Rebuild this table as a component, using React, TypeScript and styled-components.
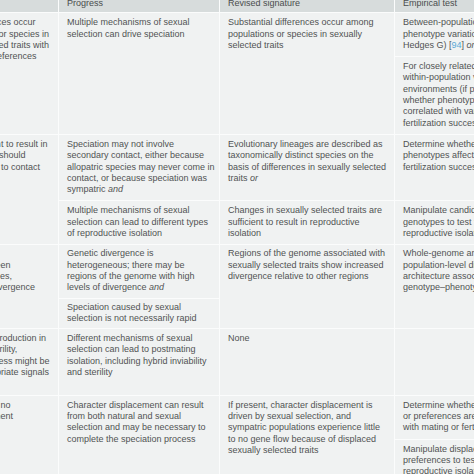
import React from "react";
import styled, { createGlobalStyle } from "styled-components";

const GlobalStyle = createGlobalStyle`
  html, body {
    margin: 0;
    padding: 0;
    background: #f0f2f2;
    overflow: hidden;
  }
  body {
    font-family: "Liberation Sans", Arial, Helvetica, sans-serif;
  }
`;

type Line = React.ReactNode;

const Viewport = styled.div`
  width: 474px;
  height: 474px;
  overflow: hidden;
`;

// the screenshot is a crop of a wider table, so the table is pulled up and left
const Table = styled.table`
  margin: -8px 0 0 -89px;
  width: 683px;
  table-layout: fixed;
  border-collapse: collapse;
  font-size: 9px;
  line-height: 11.3px;
  color: #505353;
`;

const Col = styled.col<{ $w: number }>`
  width: ${(p) => p.$w}px;
`;

const HeadCell = styled.th`
  background: #d7dcdc;
  color: #4a4d4d;
  font-weight: normal;
  text-align: left;
  padding: 6px 8px 3px;
  border: 1px solid #fbfcfc;
  border-top: none;
  white-space: nowrap;
`;

const Cell = styled.td<{ $compact?: boolean }>`
  background: #f0f2f2;
  vertical-align: top;
  text-align: left;
  padding: ${(p) => (p.$compact ? "3px 8px 4px" : "4px 8px 5px")};
  border: 1px solid #fbfcfc;
  white-space: nowrap;
`;

const LineText = styled.div`
  display: block;
`;

const Ref = styled.span`
  color: #58a9d8;
`;

const Lines: React.FC<{ lines: Line[] }> = ({ lines }) => (
  <>
    {lines.map((l, i) => (
      <LineText key={i}>{l}</LineText>
    ))}
  </>
);

const App: React.FC = () => {
  return (
    <Viewport>
      <GlobalStyle />
      <Table>
        <colgroup>
          <Col $w={147} />
          <Col $w={161} />
          <Col $w={175} />
          <Col $w={200} />
        </colgroup>
        <thead>
          <tr>
            <HeadCell>Signature</HeadCell>
            <HeadCell>Progress</HeadCell>
            <HeadCell>Revised signature</HeadCell>
            <HeadCell>Empirical test</HeadCell>
          </tr>
        </thead>
        <tbody>
          <tr>
            <Cell rowSpan={2}>
              <Lines
                lines={[
                  "Substantial differences occur",
                  "among populations or species in",
                  "their sexually selected traits with",
                  "divergent mating preferences",
                ]}
              />
            </Cell>
            <Cell rowSpan={2}>
              <Lines
                lines={[
                  "Multiple mechanisms of sexual",
                  "selection can drive speciation",
                ]}
              />
            </Cell>
            <Cell rowSpan={2}>
              <Lines
                lines={[
                  "Substantial differences occur among",
                  "populations or species in sexually",
                  "selected traits",
                ]}
              />
            </Cell>
            <Cell>
              <Lines
                lines={[
                  "Between-population differences in",
                  "phenotype variation (effect size as",
                  <>
                    Hedges G) [<Ref>94</Ref>] <em>or</em>
                  </>,
                ]}
              />
            </Cell>
          </tr>
          <tr>
            <Cell>
              <Lines
                lines={[
                  "For closely related species, compare",
                  "within-population variation across",
                  "environments (if possible) and test",
                  "whether phenotypic differences are",
                  "correlated with variation in mating or",
                  "fertilization success",
                ]}
              />
            </Cell>
          </tr>

          <tr>
            <Cell rowSpan={2}>
              <Lines
                lines={[
                  "Divergence sufficient to result in",
                  "prezygotic isolation should",
                  "be established prior to contact",
                ]}
              />
            </Cell>
            <Cell>
              <Lines
                lines={[
                  "Speciation may not involve",
                  "secondary contact, either because",
                  "allopatric species may never come in",
                  "contact, or because speciation was",
                  <>
                    sympatric <em>and</em>
                  </>,
                ]}
              />
            </Cell>
            <Cell>
              <Lines
                lines={[
                  "Evolutionary lineages are described as",
                  "taxonomically distinct species on the",
                  "basis of differences in sexually selected",
                  <>
                    traits <em>or</em>
                  </>,
                ]}
              />
            </Cell>
            <Cell>
              <Lines
                lines={[
                  "Determine whether sexually selected",
                  "phenotypes affect mating or",
                  "fertilization success",
                ]}
              />
            </Cell>
          </tr>
          <tr>
            <Cell>
              <Lines
                lines={[
                  "Multiple mechanisms of sexual",
                  "selection can lead to different types",
                  "of reproductive isolation",
                ]}
              />
            </Cell>
            <Cell>
              <Lines
                lines={[
                  "Changes in sexually selected traits are",
                  "sufficient to result in reproductive",
                  "isolation",
                ]}
              />
            </Cell>
            <Cell>
              <Lines
                lines={[
                  "Manipulate candidate phenotypes or",
                  "genotypes to test for effects on",
                  "reproductive isolation",
                ]}
              />
            </Cell>
          </tr>

          <tr>
            <Cell rowSpan={2} $compact>
              <Lines
                lines={[
                  "Genomic islands of",
                  "differentiation between",
                  "populations or species,",
                  "with low genomic divergence",
                ]}
              />
            </Cell>
            <Cell $compact>
              <Lines
                lines={[
                  "Genetic divergence is",
                  "heterogeneous; there may be",
                  "regions of the genome with high",
                  <>
                    levels of divergence <em>and</em>
                  </>,
                ]}
              />
            </Cell>
            <Cell rowSpan={2} $compact>
              <Lines
                lines={[
                  "Regions of the genome associated with",
                  "sexually selected traits show increased",
                  "divergence relative to other regions",
                ]}
              />
            </Cell>
            <Cell rowSpan={2} $compact>
              <Lines
                lines={[
                  "Whole-genome and",
                  "population-level divergence",
                  "architecture associated with",
                  "genotype–phenotype maps",
                ]}
              />
            </Cell>
          </tr>
          <tr>
            <Cell $compact>
              <Lines
                lines={[
                  "Speciation caused by sexual",
                  "selection is not necessarily rapid",
                ]}
              />
            </Cell>
          </tr>

          <tr>
            <Cell>
              <Lines
                lines={[
                  "Greatly reduced reproduction in",
                  "hybrids owing to sterility,",
                  "or hybrid mate success might be",
                  "lowered by inappropriate signals",
                  "in hybrids",
                ]}
              />
            </Cell>
            <Cell>
              <Lines
                lines={[
                  "Different mechanisms of sexual",
                  "selection can lead to postmating",
                  "isolation, including hybrid inviability",
                  "and sterility",
                ]}
              />
            </Cell>
            <Cell>
              <Lines lines={["None"]} />
            </Cell>
            <Cell />
          </tr>

          <tr>
            <Cell rowSpan={2}>
              <Lines
                lines={["Sympatric taxa with no", "character displacement"]}
              />
            </Cell>
            <Cell rowSpan={2}>
              <Lines
                lines={[
                  "Character displacement can result",
                  "from both natural and sexual",
                  "selection and may be necessary to",
                  "complete the speciation process",
                ]}
              />
            </Cell>
            <Cell rowSpan={2}>
              <Lines
                lines={[
                  "If present, character displacement is",
                  "driven by sexual selection, and",
                  "sympatric populations experience little",
                  "to no gene flow because of displaced",
                  "sexually selected traits",
                ]}
              />
            </Cell>
            <Cell>
              <Lines
                lines={[
                  "Determine whether displaced traits",
                  "or preferences are associated",
                  "with mating or fertilization success",
                ]}
              />
            </Cell>
          </tr>
          <tr>
            <Cell>
              <Lines
                lines={[
                  "Manipulate displaced traits or",
                  "preferences to test for effects on",
                  "reproductive isolation",
                ]}
              />
            </Cell>
          </tr>
        </tbody>
      </Table>
    </Viewport>
  );
};

export default App;
